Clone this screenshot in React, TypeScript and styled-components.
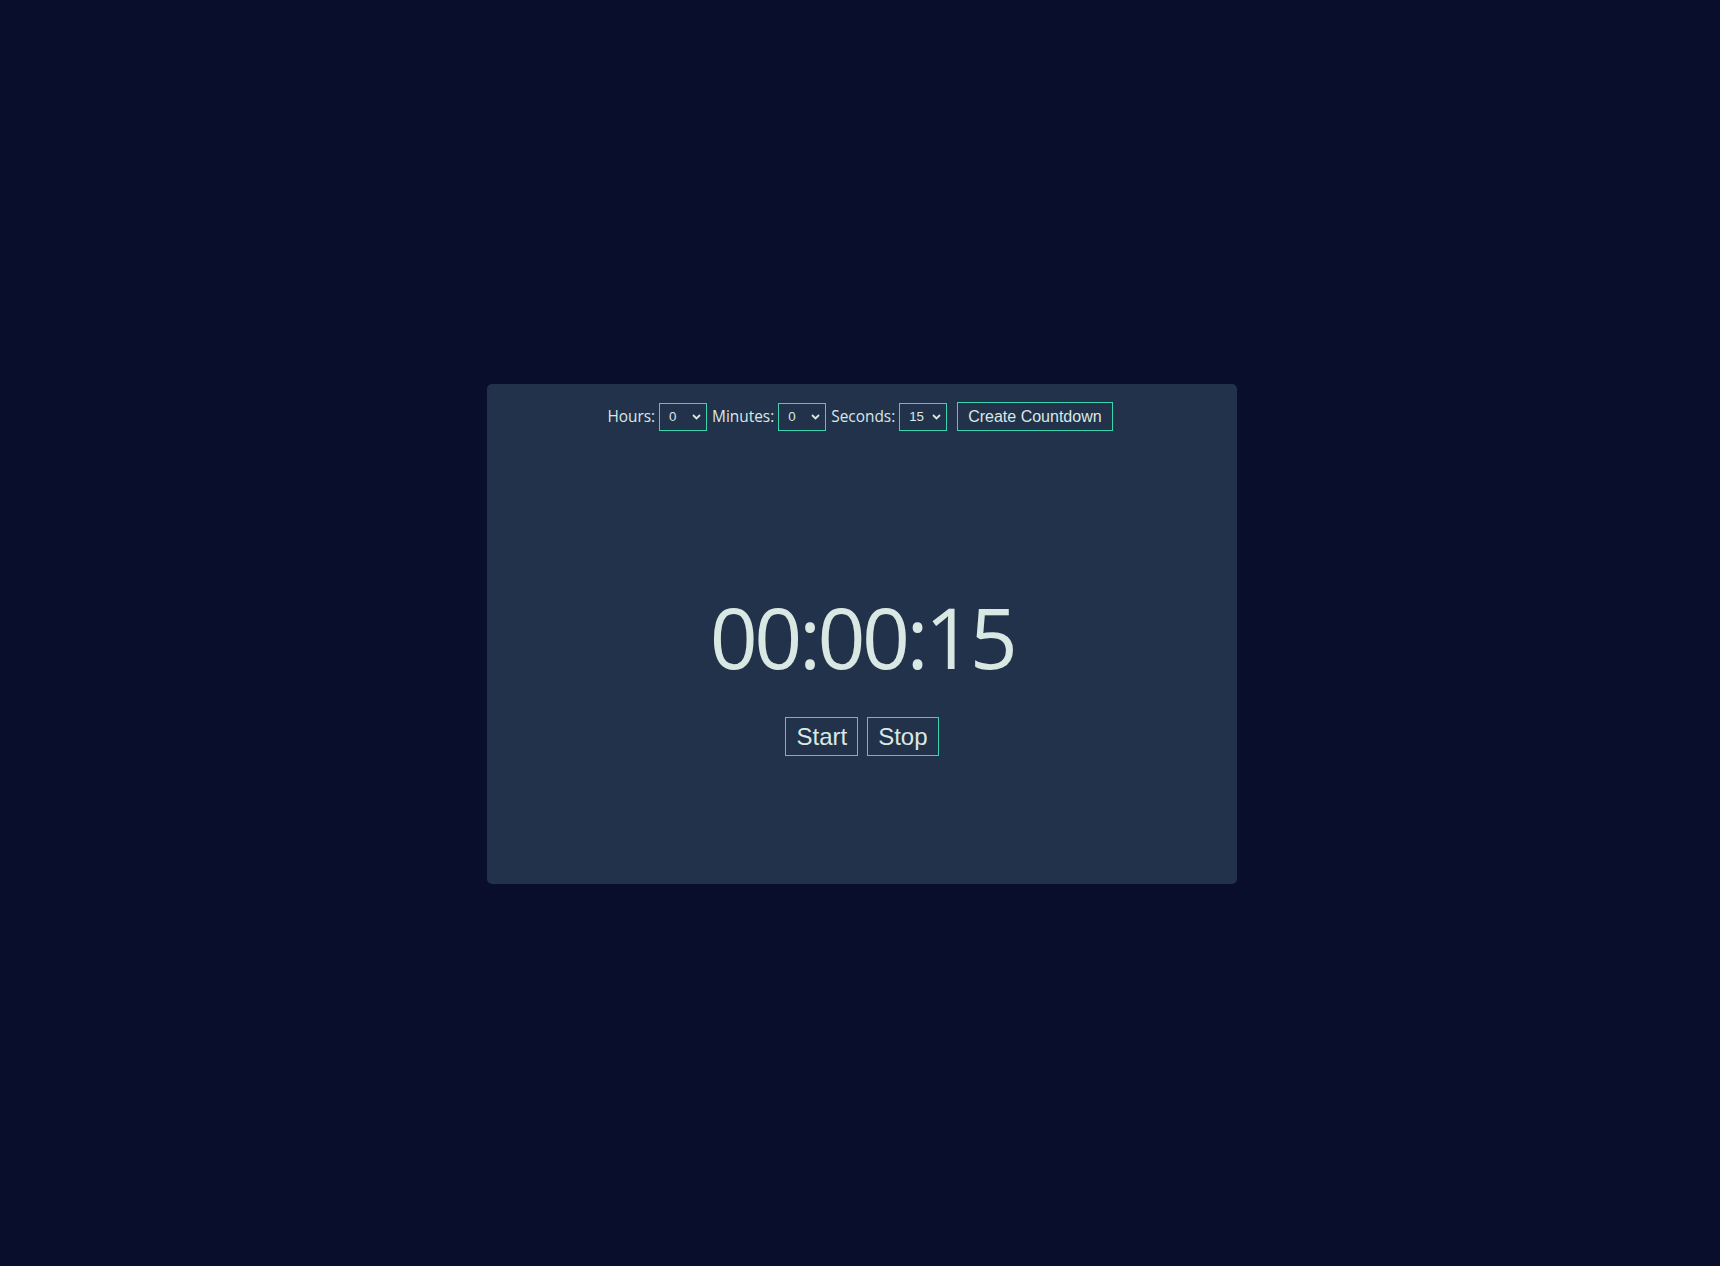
import React, { FC, useState } from "react";
import styled, { createGlobalStyle } from "styled-components";

const ink = "#dae8e4";
const accent = "#3bd6b0";
const panel = "#22324b";

const GlobalStyle = createGlobalStyle`
  html, body {
    margin: 0;
    padding: 0;
    background: #0a0e2d;
  }
  body {
    font-family: "Open Sans", "Liberation Sans", sans-serif;
    color: ${ink};
  }
`;

const Page = styled.main`
  min-height: 100vh;
  box-sizing: border-box;
  padding: 2px 0 0 4px;
  display: flex;
  align-items: center;
  justify-content: center;
`;

const TimerCard = styled.section`
  width: 750px;
  height: 500px;
  box-sizing: border-box;
  padding-top: 18px;
  background: ${panel};
  border-radius: 5px;
  display: flex;
  flex-direction: column;
  align-items: center;
`;

const Toolbar = styled.div`
  display: flex;
  align-items: center;
  gap: 5px;
  height: 29px;
  margin-right: 4px;
`;

const Field = styled.label`
  display: flex;
  align-items: center;
  gap: 4px;
  font-size: 15.4px;
`;

const SelectWrap = styled.span`
  position: relative;
  display: inline-flex;
`;

const Picker = styled.select`
  appearance: none;
  width: 48px;
  height: 28px;
  box-sizing: border-box;
  padding: 0 0 0 9px;
  margin: 0;
  border: 1px solid ${accent};
  border-radius: 0;
  background: transparent;
  color: ${ink};
  font-family: "Liberation Sans", Arial, sans-serif;
  font-size: 13.33px;
  outline: none;

  option {
    background: ${panel};
  }
`;

const Chevron = styled.svg`
  position: absolute;
  right: 6px;
  top: 11px;
  pointer-events: none;
`;

const OutlineButton = styled.button<{ $big?: boolean }>`
  box-sizing: border-box;
  margin: 0;
  border: 1px solid ${accent};
  border-radius: 0;
  background: transparent;
  color: ${ink};
  font-family: "Liberation Sans", Arial, sans-serif;
  font-size: ${(p) => (p.$big ? "24px" : "16px")};
  height: ${(p) => (p.$big ? "39px" : "29px")};
  padding: 0 10px;
  cursor: pointer;
`;

const CreateButton = styled(OutlineButton)`
  margin-left: 5px;
`;

const Clock = styled.div`
  margin-top: 164px;
  font-size: 84px;
  line-height: 1;
  letter-spacing: -3.5px;
`;

const Controls = styled.div`
  margin-top: 38px;
  display: flex;
  gap: 9px;
`;

const range = (n: number) => Array.from({ length: n }, (_, i) => i);

interface UnitSelectProps {
  label: string;
  value: number;
  max: number;
  onChange: (v: number) => void;
}

const UnitSelect: FC<UnitSelectProps> = ({ label, value, max, onChange }) => (
  <Field>
    {label}:
    <SelectWrap>
      <Picker value={value} onChange={(e) => onChange(Number(e.target.value))}>
        {range(max).map((n) => (
          <option key={n} value={n}>
            {n}
          </option>
        ))}
      </Picker>
      <Chevron width="9" height="6" viewBox="0 0 9 6">
        <polyline
          points="1,1 4.5,4.5 8,1"
          fill="none"
          stroke={ink}
          strokeWidth="1.8"
        />
      </Chevron>
    </SelectWrap>
  </Field>
);

const pad = (n: number) => String(n).padStart(2, "0");

const App: FC = () => {
  const [hours, setHours] = useState(0);
  const [minutes, setMinutes] = useState(0);
  const [seconds, setSeconds] = useState(15);
  const [left, setLeft] = useState(15);

  const h = Math.floor(left / 3600);
  const m = Math.floor((left % 3600) / 60);
  const s = left % 60;

  return (
    <>
      <GlobalStyle />
      <Page>
        <TimerCard>
          <Toolbar>
            <UnitSelect label="Hours" value={hours} max={24} onChange={setHours} />
            <UnitSelect label="Minutes" value={minutes} max={60} onChange={setMinutes} />
            <UnitSelect label="Seconds" value={seconds} max={60} onChange={setSeconds} />
            <CreateButton onClick={() => setLeft(hours * 3600 + minutes * 60 + seconds)}>
              Create Countdown
            </CreateButton>
          </Toolbar>
          <Clock>
            {pad(h)}:{pad(m)}:{pad(s)}
          </Clock>
          <Controls>
            <OutlineButton $big>Start</OutlineButton>
            <OutlineButton $big>Stop</OutlineButton>
          </Controls>
        </TimerCard>
      </Page>
    </>
  );
};

export default App;
